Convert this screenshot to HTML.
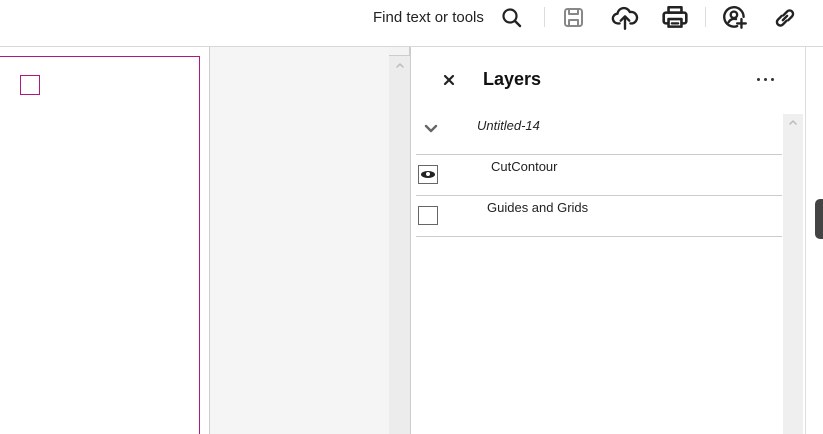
<!DOCTYPE html>
<html style="width:823px;height:434px;overflow:hidden"><head><meta charset="utf-8"><style>
*{margin:0;padding:0;box-sizing:border-box}
body{width:823px;height:434px;overflow:hidden;background:#fff;font-family:"Liberation Sans",sans-serif;position:relative;color:#222}
.a{position:absolute}
svg{position:absolute;fill:none;stroke:#222;stroke-width:2;stroke-linecap:round;stroke-linejoin:round}
.dot{position:absolute;width:3px;height:3px;background:#333;border-radius:50%}
</style></head><body>
<div class="a" style="left:0;top:46px;width:823px;height:1px;background:#d8d8d8"></div>
<div class="a" style="left:373px;top:9px;font-size:15px;color:#222">Find text or tools</div>
<svg style="left:500px;top:6px" width="24" height="24" viewBox="0 0 24 24"><circle cx="10" cy="10" r="6.5" stroke-width="2.2"/><path d="M15 15l5 5" stroke-width="2.4"/></svg>
<div class="a" style="left:544px;top:7px;width:1px;height:20px;background:#ddd"></div>
<svg style="left:562px;top:6px;stroke:#888" width="24" height="24" viewBox="0 0 24 24"><rect x="3" y="3" width="17" height="17" rx="2.5"/><path d="M7 3v5h9V3M7 20v-6h9v6"/></svg>
<svg style="left:611px;top:4px" width="28" height="28" viewBox="0 0 26 26"><path d="M8 18H6.5a4.5 4.5 0 0 1-.5-9 6 6 0 0 1 11.5-1.5A5 5 0 0 1 20 18h-2" stroke-width="2.2"/><path d="M13 23V12M9 15.5l4-4 4 4" stroke-width="2.2"/></svg>
<svg style="left:661px;top:5px" width="28" height="26" viewBox="0 0 26 24"><rect x="7" y="2" width="12" height="5" stroke-width="2.4"/><rect x="2.5" y="7" width="21" height="10" rx="2" stroke-width="2.4"/><rect x="7" y="13" width="12" height="7" fill="#fff" stroke-width="2.4"/><path d="M10 17h6"/></svg>
<div class="a" style="left:705px;top:7px;width:1px;height:20px;background:#ddd"></div>
<svg style="left:721px;top:4px" width="28" height="28" viewBox="0 0 26 26"><path d="M15 20.5A9 9 0 1 1 21 12" stroke-width="2.2"/><circle cx="12" cy="10" r="3" stroke-width="2.2"/><path d="M7 17a6 6 0 0 1 7-3M19 14v8M15 18h8" stroke-width="2.2"/></svg>
<svg style="left:772px;top:5px" width="26" height="26" viewBox="0 0 24 24"><path d="M10 14l4-4M9 10l-3.5 3.5a3 3 0 0 0 4.5 4.5L13.5 14.5M15 14l3.5-3.5a3 3 0 0 0-4.5-4.5L10.5 9.5" stroke-width="2.2"/></svg>

<div class="a" style="left:0;top:56px;width:200px;height:378px;border-top:1px solid #b0177f;border-right:1px solid #b0177f"></div>
<div class="a" style="left:20px;top:75px;width:20px;height:20px;border:1px solid #b0177f"></div>
<div class="a" style="left:209px;top:47px;width:1px;height:387px;background:#ccc"></div>
<div class="a" style="left:210px;top:47px;width:179px;height:387px;background:#f5f5f5"></div>
<div class="a" style="left:389px;top:47px;width:21px;height:387px;background:#ececec"></div>
<div class="a" style="left:389px;top:47px;width:21px;height:9px;background:#f3f3f3;border-bottom:1px solid #ccc;border-right:1px solid #ccc"></div>
<svg style="left:395px;top:61px;stroke:#bbb;stroke-width:1.5" width="10" height="8" viewBox="0 0 10 8"><path d="M2 6l3-3 3 3"/></svg>
<div class="a" style="left:410px;top:47px;width:1px;height:387px;background:#ccc"></div>
<div class="a" style="left:805px;top:47px;width:1px;height:387px;background:#ddd"></div>
<div class="a" style="left:815px;top:199px;width:8px;height:40px;background:#444;border-radius:5px 0 0 5px"></div>

<svg style="left:442px;top:73px" width="14" height="14" viewBox="0 0 14 14"><path d="M3 3l8 8M11 3l-8 8" stroke-width="2.2"/></svg>
<div class="a" style="left:483px;top:69px;font-size:18px;font-weight:bold;color:#111">Layers</div>
<div class="dot" style="left:757px;top:78px"></div><div class="dot" style="left:764px;top:78px"></div><div class="dot" style="left:771px;top:78px"></div>

<div class="a" style="left:783px;top:114px;width:20px;height:320px;background:#efefef"></div>
<svg style="left:788px;top:118px;stroke:#bbb;stroke-width:1.5" width="10" height="8" viewBox="0 0 10 8"><path d="M2 6l3-3 3 3"/></svg>
<svg style="left:424px;top:124px;stroke:#666;stroke-width:2.4" width="14" height="10" viewBox="0 0 14 10"><path d="M2 2l5 5 5-5"/></svg>
<div class="a" style="left:477px;top:118px;font-size:13px;font-style:italic;color:#222">Untitled-14</div>
<div class="a" style="left:416px;top:154px;width:366px;height:1px;background:#ccc"></div>
<div class="a" style="left:418px;top:165px;width:20px;height:19px;border:1px solid #666;background:#fff"></div>
<div class="a" style="left:421px;top:171px;width:14px;height:7px;background:#222;border-radius:50%"></div>
<div class="a" style="left:426px;top:172px;width:4px;height:4px;background:#fff;border-radius:50%"></div>
<div class="a" style="left:491px;top:159px;font-size:13px;color:#222">CutContour</div>
<div class="a" style="left:416px;top:195px;width:366px;height:1px;background:#ccc"></div>
<div class="a" style="left:418px;top:206px;width:20px;height:19px;border:1px solid #666"></div>
<div class="a" style="left:487px;top:200px;font-size:13px;color:#222">Guides and Grids</div>
<div class="a" style="left:416px;top:236px;width:366px;height:1px;background:#ccc"></div>
</body></html>
